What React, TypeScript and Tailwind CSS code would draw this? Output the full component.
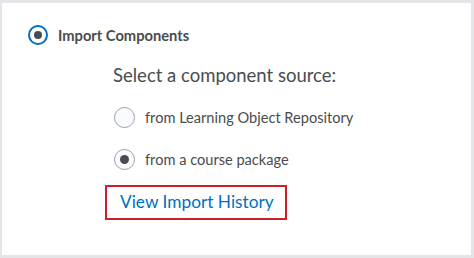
export default function App() {
  return (
    <div className="h-[258px] w-[474px] bg-[#e3e5e8] pt-[3px] pl-[2px] pr-[3px] pb-[3px] font-['Lato',sans-serif] text-[#494c4e]">
      <div className="h-full w-full bg-white pt-[21px] pl-[26px]">
        <div className="flex items-center gap-[10px]">
          <span className="flex h-[20px] w-[20px] items-center justify-center rounded-full border-2 border-[#006fbf]">
            <span className="h-[8px] w-[8px] rounded-full bg-[#494c4e]" />
          </span>
          <span className="text-[14.7px] font-bold">Import Components</span>
        </div>
        <div className="pl-[85px] pt-[17px]">
          <p className="text-[18.5px] leading-[24px]">Select a component source:</p>
          <div className="mt-[20px] flex items-center gap-[10px] pl-[1px]">
            <span className="h-[21px] w-[21px] rounded-full border border-[#9ea1a3] bg-[#f9fbff]" />
            <span className="text-[14.6px]">from Learning Object Repository</span>
          </div>
          <div className="mt-[20px] flex items-center gap-[10px] pl-[1px]">
            <span className="flex h-[21px] w-[21px] items-center justify-center rounded-full border border-[#9ea1a3] bg-[#f9fbff]">
              <span className="h-[9px] w-[9px] rounded-full bg-[#494c4e]" />
            </span>
            <span className="text-[14.6px]">from a course package</span>
          </div>
          <div className="ml-[-8px] mt-[14px] flex h-[35px] w-[182px] items-center border-2 border-[#cd2026] pl-[13px]">
            <span className="text-[17.3px] text-[#006fbf]">View Import History</span>
          </div>
        </div>
      </div>
    </div>
  );
}
